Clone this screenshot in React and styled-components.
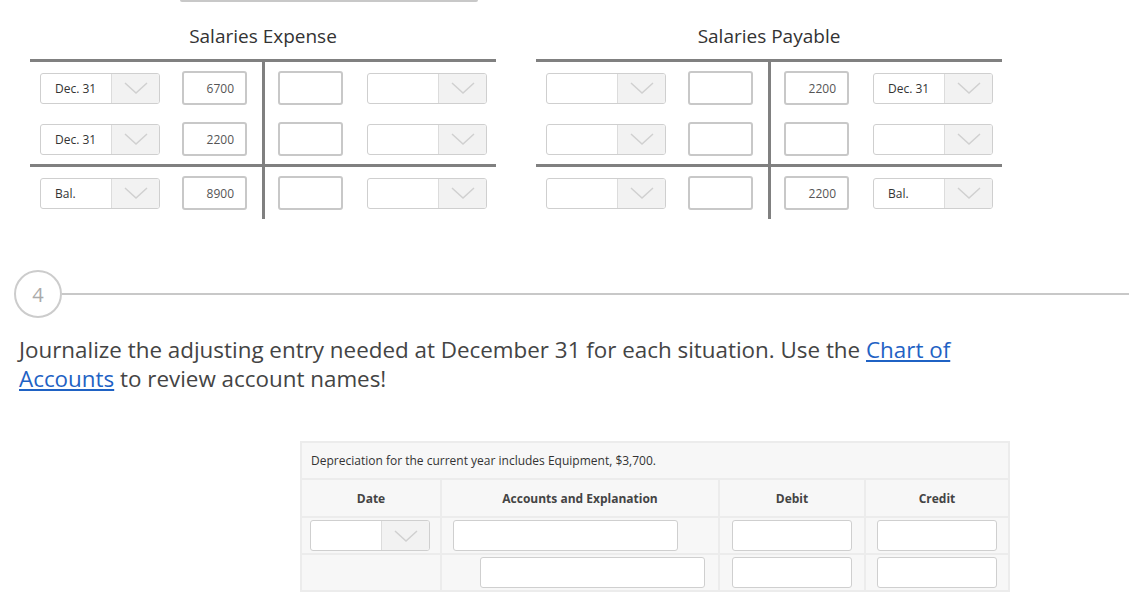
import React from 'react';
import styled, { createGlobalStyle } from 'styled-components';

const GlobalStyle = createGlobalStyle`
  body {
    margin: 0;
    background: #fff;
    font-family: 'Open Sans', 'Liberation Sans', sans-serif;
    color: #333;
  }
`;

const Page = styled.div`
  width: 1129px;
  height: 606px;
  overflow: hidden;
`;

const TopEdge = styled.div`
  margin-left: 180px;
  width: 298px;
  height: 2px;
  background: #c8c8c8;
  border-radius: 0 0 3px 3px;
`;

const Accounts = styled.div`
  display: flex;
  gap: 40px;
  padding-left: 30px;
  margin-top: 22px;
`;

const TAccount = styled.div`
  width: 466px;
`;

const Title = styled.div`
  text-align: center;
  font-size: 19px;
  line-height: 24px;
  color: #333;
  margin-bottom: 11px;
`;

const Ledger = styled.div`
  border-top: 3px solid #808080;
`;

const Section = styled.div`
  display: flex;
  border-top: ${(p) => (p.$ruled ? '3px solid #808080' : 'none')};
`;

const Side = styled.div`
  display: flex;
  flex-direction: column;
  gap: 17px;
  padding: 9px ${(p) => (p.$right ? '9px' : '14px')} ${(p) => (p.$tall ? '8px' : '9px')} ${(p) => (p.$right ? '13px' : '10px')};
  box-sizing: border-box;
  border-right: ${(p) => (p.$right ? 'none' : '3px solid #808080')};
  width: ${(p) => (p.$right ? '231px' : '235px')};
`;

const Row = styled.div`
  display: flex;
  align-items: center;
  gap: ${(p) => (p.$right ? '24px' : '22px')};
  height: 34px;
`;

const SelectBox = styled.div`
  display: flex;
  width: ${(p) => p.$width || 120}px;
  height: 31px;
  box-sizing: border-box;
  border: 1px solid #cfcfcf;
  border-radius: 3px;
  background: #fff;
  overflow: hidden;
  flex-shrink: 0;
`;

const SelectText = styled.div`
  flex: 1;
  display: flex;
  align-items: center;
  padding-left: 14px;
  font-size: 12px;
  color: #333;
`;

const SelectArrow = styled.div`
  width: 47px;
  display: flex;
  align-items: center;
  justify-content: center;
  background: #f2f2f2;
  border-left: 1px solid #dcdcdc;
`;

const Amount = styled.div`
  width: 65px;
  height: 34px;
  box-sizing: border-box;
  border: 2px solid #c8c8c8;
  border-radius: 3px;
  display: flex;
  align-items: center;
  justify-content: flex-end;
  padding-right: 11px;
  font-size: 12px;
  color: #555;
  flex-shrink: 0;
`;

const Step = styled.div`
  display: flex;
  align-items: center;
  margin-top: 51px;
  padding-left: 14px;
`;

const Circle = styled.div`
  width: 48px;
  height: 48px;
  box-sizing: border-box;
  border: 2px solid #cccccc;
  border-radius: 50%;
  display: flex;
  align-items: center;
  justify-content: center;
  font-size: 20px;
  color: #aaa;
`;

const Rule = styled.div`
  flex: 1;
  height: 2px;
  background: #c8c8c8;
`;

const Question = styled.p`
  margin: 17px 0 0 19px;
  width: 1000px;
  font-size: 22.4px;
  line-height: 29px;
  color: #444;

  a {
    color: #1f62c4;
    text-decoration: underline;
  }
`;

const Journal = styled.div`
  margin: 48px 0 0 300px;
  width: 710px;
  box-sizing: border-box;
  display: grid;
  grid-template-columns: 138px 276px 144px 142px;
  grid-template-rows: 35px 36px 35px 35px;
  gap: 2px;
  padding: 2px;
  background: #ececec;
`;

const Caption = styled.div`
  grid-column: 1 / -1;
  background: #f7f7f7;
  display: flex;
  align-items: center;
  padding-left: 9px;
  font-size: 12px;
  color: #333;
`;

const Head = styled.div`
  background: #f7f7f7;
  display: flex;
  align-items: center;
  justify-content: center;
  font-size: 12px;
  font-weight: 700;
  color: #444;
`;

const Cell = styled.div`
  background: #f7f7f7;
  display: flex;
  align-items: center;
  justify-content: ${(p) => (p.$center ? 'center' : 'flex-start')};
  padding-left: ${(p) => p.$indent || 0}px;
`;

const Field = styled.div`
  width: ${(p) => p.$width}px;
  height: 31px;
  box-sizing: border-box;
  border: 1px solid #cfcfcf;
  border-radius: 3px;
  background: #fff;
`;

const Chevron = () => (
  <svg width="24" height="12" viewBox="0 0 24 12">
    <polyline points="1,1 12,11 23,1" fill="none" stroke="#d0d0d0" strokeWidth="1.5" />
  </svg>
);

const Select = ({ value, width }) => (
  <SelectBox $width={width}>
    <SelectText>{value}</SelectText>
    <SelectArrow>
      <Chevron />
    </SelectArrow>
  </SelectBox>
);

const accounts = [
  {
    title: 'Salaries Expense',
    top: [
      { left: { date: 'Dec. 31', amt: '6700' }, right: {} },
      { left: { date: 'Dec. 31', amt: '2200' }, right: {} },
    ],
    bottom: { left: { date: 'Bal.', amt: '8900' }, right: {} },
  },
  {
    title: 'Salaries Payable',
    top: [
      { left: {}, right: { date: 'Dec. 31', amt: '2200' } },
      { left: {}, right: {} },
    ],
    bottom: { left: {}, right: { date: 'Bal.', amt: '2200' } },
  },
];

const SideRows = ({ rows, right, tall }) => (
  <Side $right={right} $tall={tall}>
    {rows.map((r, i) =>
      right ? (
        <Row key={i} $right>
          <Amount>{r.amt}</Amount>
          <Select value={r.date} />
        </Row>
      ) : (
        <Row key={i}>
          <Select value={r.date} />
          <Amount>{r.amt}</Amount>
        </Row>
      )
    )}
  </Side>
);

export default function App() {
  return (
    <Page>
      <GlobalStyle />
      <TopEdge />
      <Accounts>
        {accounts.map((acc) => (
          <TAccount key={acc.title}>
            <Title>{acc.title}</Title>
            <Ledger>
              <Section>
                <SideRows rows={acc.top.map((r) => r.left)} tall />
                <SideRows rows={acc.top.map((r) => r.right)} right tall />
              </Section>
              <Section $ruled>
                <SideRows rows={[acc.bottom.left]} />
                <SideRows rows={[acc.bottom.right]} right />
              </Section>
            </Ledger>
          </TAccount>
        ))}
      </Accounts>

      <Step>
        <Circle>4</Circle>
        <Rule />
      </Step>

      <Question>
        Journalize the adjusting entry needed at December 31 for each situation. Use the{' '}
        <a href="#chart">Chart of</a>
        <br />
        <a href="#chart">Accounts</a> to review account names!
      </Question>

      <Journal>
        <Caption>Depreciation for the current year includes Equipment, $3,700.</Caption>
        <Head>Date</Head>
        <Head>Accounts and Explanation</Head>
        <Head>Debit</Head>
        <Head>Credit</Head>

        <Cell $indent={8}>
          <Select width={120} />
        </Cell>
        <Cell $indent={11}>
          <Field $width={225} />
        </Cell>
        <Cell $center>
          <Field $width={120} />
        </Cell>
        <Cell $center>
          <Field $width={120} />
        </Cell>

        <Cell />
        <Cell $indent={38}>
          <Field $width={225} />
        </Cell>
        <Cell $center>
          <Field $width={120} />
        </Cell>
        <Cell $center>
          <Field $width={120} />
        </Cell>
      </Journal>
    </Page>
  );
}
